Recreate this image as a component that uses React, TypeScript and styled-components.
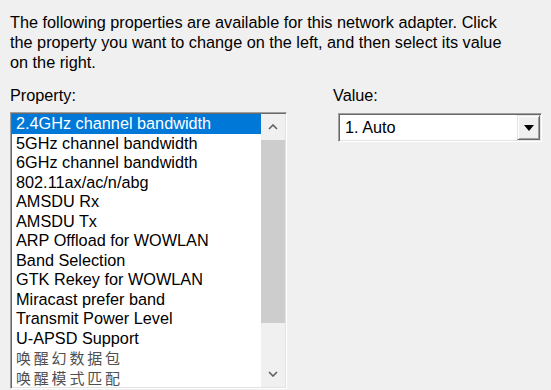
import React from 'react'
import styled, { createGlobalStyle } from 'styled-components'

const GlobalStyle = createGlobalStyle`
  html, body {
    margin: 0;
    padding: 0;
    background: #f0f0f0;
  }
  body {
    font-family: "Liberation Sans", Arial, sans-serif;
    font-size: 16.25px;
    color: #000;
  }
`

const Page = styled.div`
  width: 551px;
  height: 390px;
  box-sizing: border-box;
  padding: 12px 0 0 10px;
  overflow: hidden;
  background: #f0f0f0;
`

const Intro = styled.p`
  margin: 0;
  line-height: 20px;
`

const Columns = styled.div`
  display: grid;
  grid-template-columns: 277px 1fr;
  column-gap: 46px;
  margin-top: 13px;
`

const Column = styled.div`
  display: flex;
  flex-direction: column;
`

const Label = styled.div`
  line-height: 20px;
  margin-bottom: 7px;
`

const Sunken = styled.div`
  box-sizing: border-box;
  border: 1px solid;
  border-color: #a0a0a0 #ffffff #ffffff #a0a0a0;
  box-shadow: inset 1px 1px 0 #696969, inset -1px -1px 0 #e3e3e3;
  padding: 1px;
`

const ListBox = styled(Sunken)`
  width: 277px;
  height: 277px;
  display: flex;
`

const Items = styled.ul`
  flex: 1;
  margin: 0;
  padding: 0;
  list-style: none;
  background: #fff;
`

const Row = styled.li<{ $selected?: boolean; $cjk?: boolean }>`
  height: 19.5px;
  line-height: 19.5px;
  padding-left: 4px;
  white-space: nowrap;
  background: ${({ $selected }) => ($selected ? '#0078d7' : 'transparent')};
  color: ${({ $selected, $cjk }) => ($selected ? '#fff' : $cjk ? '#505050' : '#000')};
  ${({ $cjk }) =>
    $cjk &&
    `font-family: "Noto Sans CJK SC", "Liberation Sans", sans-serif;
     font-size: 15px;
     letter-spacing: 2.8px;`}
`

const ScrollBar = styled.div`
  width: 24px;
  display: flex;
  flex-direction: column;
  background: #f0f0f0;
`

const ArrowButton = styled.div`
  height: 26px;
  display: flex;
  align-items: center;
  justify-content: center;
  flex-shrink: 0;
`

const Track = styled.div`
  flex: 1;
`

const Thumb = styled.div<{ $size: number }>`
  height: ${({ $size }) => $size}px;
  background: #cdcdcd;
`

const Combo = styled(Sunken)`
  width: 204px;
  height: 29px;
  margin: 1px 0 0 5px;
  display: flex;
  background: #fff;
`

const ComboText = styled.div`
  flex: 1;
  padding-left: 5px;
  line-height: 25px;
  background: #fff;
`

const DropButton = styled.div`
  width: 23px;
  box-sizing: border-box;
  background: #f0f0f0;
  border: 1px solid;
  border-color: #e3e3e3 #696969 #696969 #e3e3e3;
  box-shadow: inset 1px 1px 0 #ffffff, inset -1px -1px 0 #a0a0a0;
  display: flex;
  align-items: center;
  justify-content: center;
`

const Chevron = ({ down }: { down?: boolean }) => (
  <svg width="10" height="6" viewBox="0 0 10 6">
    <path
      d={down ? 'M1 1 L5 5 L9 1' : 'M1 5 L5 1 L9 5'}
      fill="none"
      stroke="#606060"
      strokeWidth="1.6"
    />
  </svg>
)

const properties = [
  '2.4GHz channel bandwidth',
  '5GHz channel bandwidth',
  '6GHz channel bandwidth',
  '802.11ax/ac/n/abg',
  'AMSDU Rx',
  'AMSDU Tx',
  'ARP Offload for WOWLAN',
  'Band Selection',
  'GTK Rekey for WOWLAN',
  'Miracast prefer band',
  'Transmit Power Level',
  'U-APSD Support',
  '唤醒幻数据包',
  '唤醒模式匹配',
]

const isCjk = (s: string) => /[\u4e00-\u9fff]/.test(s)

const App = () => {
  return (
    <>
      <GlobalStyle />
      <Page>
        <Intro>
          The following properties are available for this network adapter. Click
          <br />
          the property you want to change on the left, and then select its value
          <br />
          on the right.
        </Intro>
        <Columns>
          <Column>
            <Label>Property:</Label>
            <ListBox>
              <Items>
                {properties.map((p, i) => (
                  <Row key={p} $selected={i === 0} $cjk={isCjk(p)}>
                    {p}
                  </Row>
                ))}
              </Items>
              <ScrollBar>
                <ArrowButton>
                  <Chevron />
                </ArrowButton>
                <Track>
                  <Thumb $size={183} />
                </Track>
                <ArrowButton>
                  <Chevron down />
                </ArrowButton>
              </ScrollBar>
            </ListBox>
          </Column>
          <Column>
            <Label>Value:</Label>
            <Combo>
              <ComboText>1. Auto</ComboText>
              <DropButton>
                <svg width="10" height="6" viewBox="0 0 10 6">
                  <path d="M0 0 H10 L5 6 Z" fill="#000" />
                </svg>
              </DropButton>
            </Combo>
          </Column>
        </Columns>
      </Page>
    </>
  )
}

export default App
